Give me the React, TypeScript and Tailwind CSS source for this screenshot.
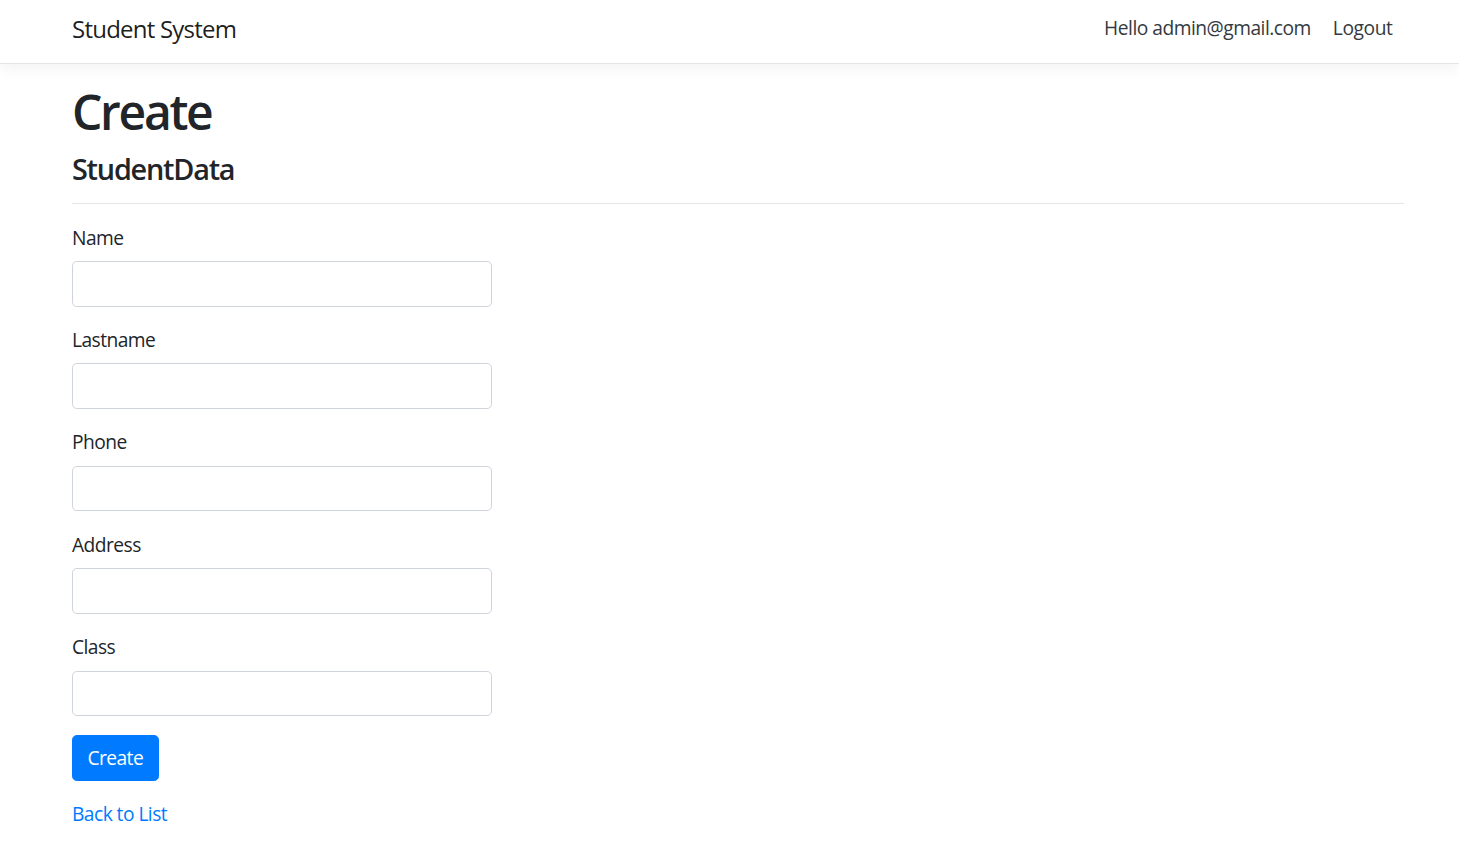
const fields = ["Name", "Lastname", "Phone", "Address", "Class"];

export default function App() {
  return (
    <div
      className="min-h-screen bg-white text-[#212529] text-[19.2px] leading-[1.5] tracking-[-0.028em]"
      style={{ fontFamily: '"Open Sans", "Noto Sans", sans-serif' }}
    >
      <header className="h-[64px] border-b border-[#e5e5e5] bg-white shadow-[0_4.8px_14.4px_rgba(0,0,0,0.05)]">
        <nav className="ml-[72px] w-[1332px] h-full pb-[6px] flex items-center justify-between">
          <a href="#" className="text-[24px] text-black/90 leading-[1.5] tracking-[-0.032em]">
            Student System
          </a>
          <ul className="flex items-center mr-[2px]">
            <li>
              <a href="#" className="block pl-[9.6px] pr-[11px] text-[#343a40] tracking-[-0.026em]">
                Hello admin@gmail.com
              </a>
            </li>
            <li>
              <button className="block pl-[11px] pr-[9.6px] text-[#343a40] tracking-[-0.022em]">Logout</button>
            </li>
          </ul>
        </nav>
      </header>

      <main className="ml-[72px] w-[1332px] pt-[19.2px]">
        <h1 className="text-[48px] font-semibold leading-[1.2] mb-[11.6px] tracking-[-0.048em]">
          Create
        </h1>
        <h4 className="text-[28.8px] font-semibold leading-[1.2] tracking-[-0.042em]">StudentData</h4>
        <hr className="mt-[16.4px] mb-[19.2px] border-t border-black/10" />

        <div className="w-[420px]">
          <form onSubmit={(e) => e.preventDefault()}>
            {fields.map((f) => (
              <div key={f} className="mb-[19.2px]">
                <label className="block mb-[9.6px] leading-[28px]">{f}</label>
                <input
                  type="text"
                  className="block w-full h-[45.6px] px-[14.4px] border border-[#ced4da] rounded-[4.8px] bg-white outline-none"
                />
              </div>
            ))}
            <div className="mb-[19.2px]">
              <button
                type="submit"
                className="h-[45.6px] px-[14.4px] bg-[#007bff] text-white rounded-[4.8px] border border-[#007bff]"
              >
                Create
              </button>
            </div>
          </form>
        </div>

        <div>
          <a href="#" className="text-[#007bff]">
            Back to List
          </a>
        </div>
      </main>
    </div>
  );
}
